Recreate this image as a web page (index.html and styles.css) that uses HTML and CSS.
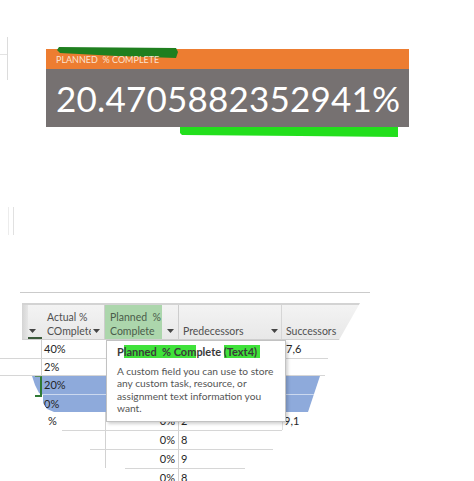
FILE: index.html
```html
<!DOCTYPE html>
<html>
<head>
<meta charset="utf-8">
<link rel="stylesheet" href="styles.css">
</head>
<body>
<div class="page">
  <section class="top">
    <div class="edge-a"></div>
    <div class="card">
      <div class="card-label">PLANNED&nbsp; % COMPLETE</div>
      <div class="card-value">20.4705882352941%</div>
      <div class="mark mark-dark"></div>
      <div class="mark mark-bright"></div>
    </div>
  </section>
  <div class="edge-b"></div>
  <section class="sheet">
    <div class="sheet-rule"></div>
    <div class="head">
      <div class="hc hc-sel"><svg class="dd" viewBox="0 0 7 4"><path d="M0 0H7L3.5 4Z"/></svg></div>
      <div class="hc hc-actual">
        <div class="two">
          <div>Actual %</div>
          <div class="line2"><span class="clip">COmplete</span><svg class="dd dd-in" viewBox="0 0 7 4"><path d="M0 0H7L3.5 4Z"/></svg></div>
        </div>
      </div>
      <div class="hc hc-planned"><div class="two"><div>Planned&nbsp; %</div><div>Complete</div></div></div>
      <div class="hc hc-drop"><svg class="dd" viewBox="0 0 7 4"><path d="M0 0H7L3.5 4Z"/></svg></div>
      <div class="hc hc-pred"><span>Predecessors</span><svg class="dd dd-end" viewBox="0 0 7 4"><path d="M0 0H7L3.5 4Z"/></svg></div>
      <div class="hc hc-succ"><span>Successors</span></div>
    </div>
    <div class="rows">
      <div class="row row-top row-1"><div class="c c0"></div><div class="c c1">40%</div><div class="c c2"></div><div class="c c3"></div><div class="c c4">7,6</div></div>
      <div class="rule rule-1"></div>
      <div class="row row-top row-2"><div class="c c0"></div><div class="c c1">2%</div><div class="c c2"></div><div class="c c3"></div><div class="c c4"></div></div>
      <div class="rule rule-2"></div>
      <div class="sel">
        <div class="row"><div class="c c0"></div><div class="c c1">20%</div><div class="c c2"></div><div class="c c3"></div><div class="c c4"></div></div>
        <div class="row"><div class="c c0"></div><div class="c c1">0%</div><div class="c c2"></div><div class="c c3"></div><div class="c c4"></div></div>
      </div>
      <div class="row row-low row-5"><div class="c c0"></div><div class="c c1">%</div><div class="c c2">0%</div><div class="c c3">2</div><div class="c c4">9,1</div></div>
      <div class="rule rule-5"></div>
      <div class="row row-low"><div class="c c0"></div><div class="c c1"></div><div class="c c2">0%</div><div class="c c3">8</div><div class="c c4"></div></div>
      <div class="rule rule-6"></div>
      <div class="row row-low"><div class="c c0"></div><div class="c c1"></div><div class="c c2">0%</div><div class="c c3">9</div><div class="c c4"></div></div>
      <div class="rule rule-7"></div>
      <div class="row row-low row-8"><div class="c c0"></div><div class="c c1"></div><div class="c c2">0%</div><div class="c c3">8</div><div class="c c4"></div></div>
    </div>
    <div class="cursor"></div>
    <div class="tip">
      <div class="tip-title">P<span class="hl">lanned&nbsp; % Com</span>plete <span class="hl">(Text4)&nbsp;</span></div>
      <div class="tip-body">A custom field you can use to store<br>any custom task, resource, or<br>assignment text information you<br>want.</div>
    </div>
  </section>
</div>
</body>
</html>
```

FILE: styles.css
```css
* {
  box-sizing: border-box;
  margin: 0;
  padding: 0;
}

html,
body {
  width: 474px;
  height: 481px;
  overflow: hidden;
  background: #ffffff;
}

body {
  font-family: Lato, "Liberation Sans", sans-serif;
}

/* ---------- top card ---------- */
.top {
  display: flex;
  align-items: flex-start;
}

.edge-a {
  width: 8px;
  height: 43px;
  margin-top: 37px;
  border-right: 1px solid #dcdcdc;
  background: linear-gradient(#e3e3e3, #e3e3e3) no-repeat 0 17px / 7px 1px;
}

.card {
  position: relative;
  width: 363px;
  margin-left: 38px;
  margin-top: 49px;
  background: linear-gradient(#ed7d31 0 20px, #767171 20px 100%);
}

.card-label {
  position: relative;
  z-index: 2;
  height: 20px;
  line-height: 21px;
  padding-left: 10px;
  color: #fbe3d0;
  font-size: 9px;
  white-space: nowrap;
}

.card-value {
  height: 58px;
  line-height: 58px;
  padding-left: 10px;
  color: #ffffff;
  font-size: 35px;
  letter-spacing: 0.2px;
  white-space: nowrap;
}

.mark {
  position: absolute;
}

.mark-dark {
  z-index: 1;
  left: 11px;
  top: -2px;
  width: 121px;
  height: 11px;
  background: #1f7f1f;
  clip-path: polygon(2px 0, 119px 1px, 121px 5px, 119px 11px, 60px 9px, 3px 6px, 0 3px);
}

.mark-bright {
  left: 134px;
  top: 78px;
  width: 218px;
  height: 10px;
  background: #22df1c;
  clip-path: polygon(0 0, 218px 0, 218px 10px, 120px 9px, 2px 8px, 0 6px);
}

.edge-b {
  width: 6px;
  height: 28px;
  margin-top: 80px;
  margin-left: 8px;
  border-left: 1px solid #ececec;
  border-right: 1px solid #e1e1e1;
}

/* ---------- sheet ---------- */
.sheet {
  position: relative;
  margin-top: 57px;
}

.sheet-rule {
  width: 350px;
  height: 1px;
  margin-left: 20px;
  background: #cbcbcb;
}

.head {
  display: grid;
  grid-template-columns: 20px 63px 57px 17px 103px 1fr;
  width: 338px;
  height: 37px;
  margin-top: 10px;
  margin-left: 22px;
  background: linear-gradient(#f3f3f3, #e8e8e8);
  border-top: 2px solid #d3d3d3;
  border-bottom: 1px solid #d0d0d0;
  clip-path: polygon(0 0, 100% 0, calc(100% - 21px) 100%, 0 100%);
  font-size: 10.5px;
  line-height: 14px;
  color: #505050;
}

.hc {
  display: flex;
  align-items: flex-end;
  padding: 0 0 1px 5px;
  white-space: nowrap;
  overflow: hidden;
}

.dd {
  flex: none;
  width: 7px;
  height: 4px;
  fill: #454545;
}

.hc-sel {
  justify-content: center;
  padding: 0 0 6px;
  background:
    linear-gradient(#3b5a3b, #3b5a3b) no-repeat right bottom / 14px 2px,
    linear-gradient(to right, #d4d4d4, #e6e6e6 6px, transparent 6px);
}

.hc-actual {
  border-right: 1px solid #cdcdcd;
}

.line2 {
  display: flex;
  align-items: center;
}

.clip {
  display: inline-block;
  width: 44px;
  overflow: hidden;
}

.dd-in {
  margin-left: 2px;
}

.hc-planned {
  background: #acd6ac;
  color: #4a5c4a;
}

.hc-drop {
  justify-content: center;
  padding: 0 0 6px;
  border-right: 1px solid #cdcdcd;
}

.hc-pred {
  justify-content: space-between;
  padding: 0 3px 1px 4px;
  border-right: 1px solid #d6d6d6;
}

.dd-end {
  margin-bottom: 5px;
}

.hc-succ {
  padding-left: 4px;
}

.rows {
  font-size: 11px;
  color: #262626;
}

.row {
  display: grid;
  grid-template-columns: 42px 63px 74px 103px 1fr;
  height: 18px;
  line-height: 18px;
  white-space: nowrap;
}

.row-2 {
  height: 16px;
  line-height: 16px;
}

.c1 {
  padding-left: 2px;
}

.c2 {
  text-align: right;
  padding-right: 3px;
}

.c3 {
  padding-left: 2px;
}

.c4 {
  padding-left: 4px;
}

.row-top .c0 {
  border-right: 1px solid #cfcfcf;
}

.rule {
  height: 1px;
  background: #d6d6d6;
}

.rule-1 {
  width: 328px;
}

.rule-2 {
  width: 325px;
}

.rule-5 {
  width: 220px;
  margin-left: 62px;
}

.rule-6 {
  width: 183px;
  margin-left: 90px;
}

.rule-7 {
  width: 120px;
  margin-left: 125px;
}

.sel {
  background: #8eaadb;
  clip-path: polygon(32px 0, 320px 0, 308px 36px, 54px 36px, 47px 33px, 43px 27px, 43px 19px, 39px 17px, 35px 9px);
}

.sel .row + .row {
  border-top: 1px solid rgba(255, 255, 255, 0.55);
  line-height: 17px;
}

.row-low .c2 {
  border-left: 1px solid #d2d2d2;
  border-right: 1px solid #d2d2d2;
}

.row-8 .c2 {
  border-left-color: transparent;
}

.row-5 .c1 {
  padding-left: 6px;
}

.row-5 .c4 {
  padding-left: 1px;
  border-left: 1px solid #e0e0e0;
}

.cursor {
  position: absolute;
  top: 84px;
  left: 35px;
  width: 7px;
  height: 21px;
  border-top: 1px solid #5b8f5b;
  border-right: 2px solid #2f7a34;
  border-bottom: 2px solid #2f7a34;
}

.tip {
  position: absolute;
  top: 48px;
  left: 106px;
  width: 180px;
  height: 82px;
  padding: 4px 10px 0;
  background: #ffffff;
  border: 1px solid #c2c2c2;
  box-shadow: 2px 2px 3px rgba(0, 0, 0, 0.18);
  font-size: 11px;
  white-space: nowrap;
}

.tip-title {
  font-weight: 700;
  line-height: 14px;
  color: #3a3a3a;
}

.hl {
  background: #3fe23a;
}

.tip-body {
  margin-top: 6px;
  font-size: 10.2px;
  line-height: 12.3px;
  color: #555555;
}
```
